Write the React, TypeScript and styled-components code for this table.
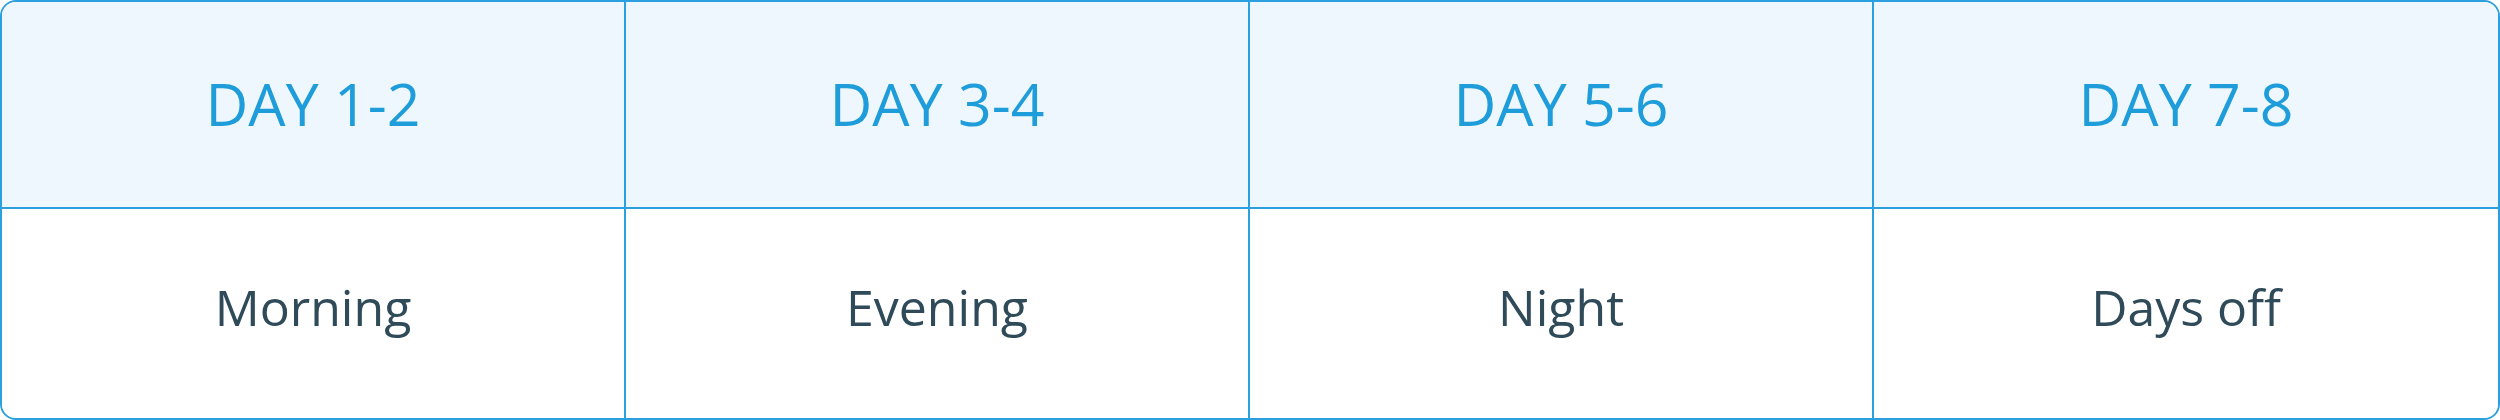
import React from 'react';
import styled, { createGlobalStyle } from 'styled-components';

const shifts = [
  { day: 'DAY 1-2', name: 'Morning' },
  { day: 'DAY 3-4', name: 'Evening' },
  { day: 'DAY 5-6', name: 'Night' },
  { day: 'DAY 7-8', name: 'Days off' },
];

const App: React.FC = () => {
  return (
    <>
      <GlobalStyle />
      <Table>
        {shifts.map((s, i) => (
          <HeadCell key={s.day} last={i === shifts.length - 1}>
            {s.day}
          </HeadCell>
        ))}
        {shifts.map((s, i) => (
          <BodyCell key={s.name} last={i === shifts.length - 1}>
            {s.name}
          </BodyCell>
        ))}
      </Table>
    </>
  );
};

export default App;

const GlobalStyle = createGlobalStyle`
  body {
    margin: 0;
    background: #ffffff;
    font-family: 'Open Sans', 'Noto Sans', sans-serif;
  }
`;

const Table = styled.div`
  width: 2500px;
  height: 420px;
  box-sizing: border-box;
  border: 2px solid #2c9fdf;
  border-radius: 16px;
  overflow: hidden;
  display: grid;
  grid-template-columns: repeat(4, 1fr);
  grid-template-rows: 207px 1fr;
`;

const Cell = styled.div<{ last?: boolean }>`
  display: flex;
  align-items: center;
  justify-content: center;
  border-right: ${(p) => (p.last ? 'none' : '2px solid #2c9fdf')};
`;

const HeadCell = styled(Cell)`
  background: #eef7fd;
  color: #1f9ddb;
  font-size: 59px;
  padding-bottom: 4px;
  border-bottom: 2px solid #2c9fdf;
`;

const BodyCell = styled(Cell)`
  background: #ffffff;
  color: #2f4a58;
  font-size: 50px;
  padding-bottom: 14px;
`;
